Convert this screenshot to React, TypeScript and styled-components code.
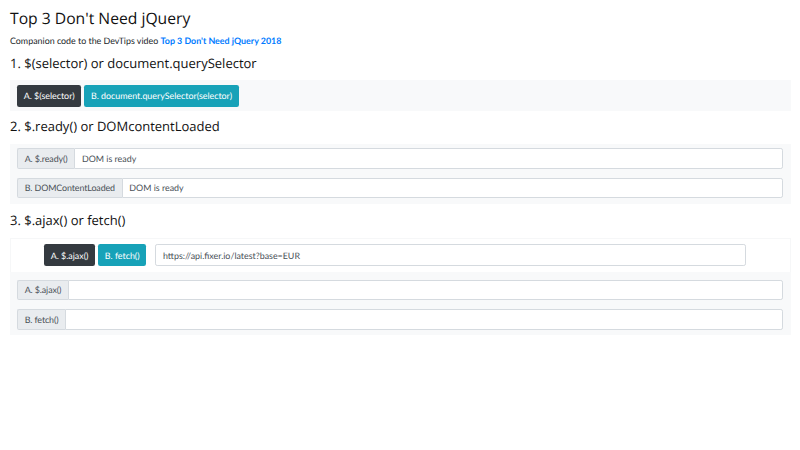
import React from "react";
import styled, { createGlobalStyle } from "styled-components";

const GlobalStyle = createGlobalStyle`
  * {
    box-sizing: border-box;
  }
  html, body {
    margin: 0;
    background: #fff;
    color: #212529;
    font-family: Lato, Roboto, sans-serif;
    font-size: 8.9px;
    text-rendering: geometricPrecision;
  }
  button, input {
    text-rendering: geometricPrecision;
  }
`;

const Page = styled.div`
  padding: 10px 9px 0 10px;
`;

const Title = styled.h1`
  margin: 0;
  height: 24px;
  line-height: 17px;
  font-family: "Open Sans", sans-serif;
  font-weight: 400;
  font-size: 15.7px;
  color: #111;
`;

const Lead = styled.p`
  margin: 0;
  height: 13px;
  line-height: 13px;
`;

const Link = styled.a`
  color: #007bff;
  font-weight: 700;
  text-decoration: none;
`;

const Heading = styled.h2`
  margin: 0;
  padding-top: 5.5px;
  height: 33px;
  line-height: 20px;
  font-family: "Open Sans", sans-serif;
  font-weight: 400;
  font-size: 13px;
  color: #111;
`;

const ButtonWell = styled.section`
  display: flex;
  gap: 3px;
  padding: 5px 7px 4px;
  background: #f8f9fa;
`;

const GroupWell = styled.section`
  display: flex;
  flex-direction: column;
  gap: 9px;
  margin-bottom: 1px;
  padding: 4.5px 8px 5.5px 7px;
  background: #f8f9fa;
`;

const Button = styled.button<{ $variant: "dark" | "info" }>`
  height: 21.5px;
  padding: 0 6.7px;
  border: 0;
  border-radius: 2.2px;
  font: inherit;
  color: #fff;
  background: ${({ $variant }) => ($variant === "dark" ? "#343a40" : "#17a2b8")};
`;

const Group = styled.div`
  display: flex;
  height: 20.5px;
`;

const Addon = styled.span`
  display: flex;
  align-items: center;
  padding: 0 6.7px;
  background: #e9ecef;
  border: 1px solid #d5dadf;
  border-right: 0;
  border-radius: 2.2px 0 0 2.2px;
  color: #495057;
  letter-spacing: -0.1px;
  white-space: nowrap;
`;

const Input = styled.input`
  flex: 1;
  min-width: 0;
  padding: 0 6.7px;
  border: 1px solid #d5dadf;
  border-radius: 0 2.2px 2.2px 0;
  background: #fff;
  color: #495057;
  font: inherit;
  outline: 0;
`;

const FetchWell = styled.section`
  background: #f8f9fa;
`;

const Toolbar = styled.div`
  display: flex;
  align-items: center;
  gap: 3px;
  height: 34px;
  padding: 0 44px 0 33px;
  background: #fff;
  border: 1px solid #f6f7f8;
  border-bottom: 0;
`;

const UrlInput = styled(Input)`
  height: 21.5px;
  margin-left: 6px;
  border-radius: 2.2px;
`;

const Stack = styled.div`
  display: flex;
  flex-direction: column;
  gap: 9px;
  padding: 8px 8px 5px 7px;
`;

export default function App() {
  return (
    <Page>
      <GlobalStyle />
      <Title>Top 3 Don't Need jQuery</Title>
      <Lead>
        Companion code to the DevTips video <Link href="#">Top 3 Don't Need jQuery 2018</Link>
      </Lead>
      <Heading>1. $(selector) or document.querySelector</Heading>
      <ButtonWell>
        <Button $variant="dark">A. $(selector)</Button>
        <Button $variant="info">B. document.querySelector(selector)</Button>
      </ButtonWell>
      <Heading>2. $.ready() or DOMcontentLoaded</Heading>
      <GroupWell>
        <Group>
          <Addon>A. $.ready()</Addon>
          <Input readOnly value="DOM is ready" />
        </Group>
        <Group>
          <Addon>B. DOMContentLoaded</Addon>
          <Input readOnly value="DOM is ready" />
        </Group>
      </GroupWell>
      <Heading>3. $.ajax() or fetch()</Heading>
      <FetchWell>
        <Toolbar>
          <Button $variant="dark">A. $.ajax()</Button>
          <Button $variant="info">B. fetch()</Button>
          <UrlInput readOnly value="https://api.fixer.io/latest?base=EUR" />
        </Toolbar>
        <Stack>
          <Group>
            <Addon>A. $.ajax()</Addon>
            <Input readOnly />
          </Group>
          <Group>
            <Addon>B. fetch()</Addon>
            <Input readOnly />
          </Group>
        </Stack>
      </FetchWell>
    </Page>
  );
}
